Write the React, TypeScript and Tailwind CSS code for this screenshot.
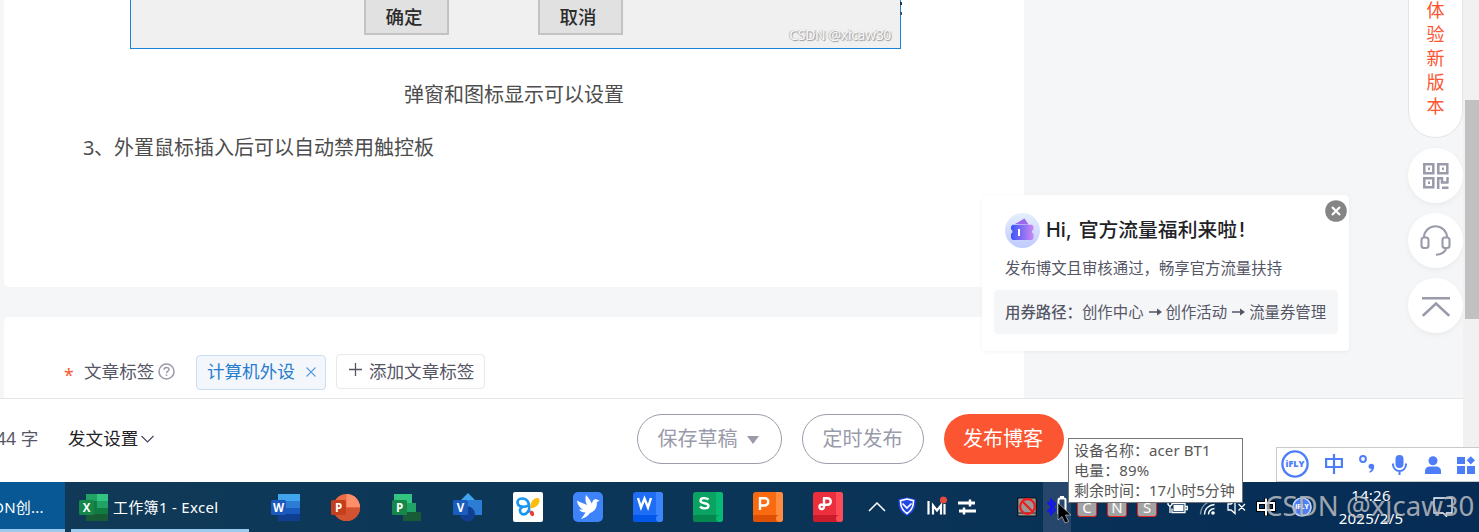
import type { ReactNode } from "react";

const sans = "font-['Noto_Sans','Noto_Sans_CJK_SC',sans-serif]";

/* ---------- Editor page ---------- */

function DialogShot() {
  const button =
    "flex h-[47px] w-[85px] items-end justify-center border-2 border-[#c3c3c3] bg-[#e1e1e1] pr-[5px] pb-[4px] text-[18.5px] font-medium leading-[24px] text-[#2c2c2c]";
  return (
    <div className="relative ml-[126px] flex h-[49px] w-[771px] items-end border border-t-0 border-[#1883d7] bg-[#f0f0f0] pb-[13px]">
      <div className="flex gap-[89px] pl-[233px]">
        <div className={button}>确定</div>
        <div className={button}>取消</div>
      </div>
      <span className="absolute right-[9px] bottom-[3px] text-[14px] leading-[20px] tracking-[-0.35px] whitespace-pre text-[#f8f8f8] [text-shadow:1px_1px_1px_#999,-1px_0_1px_#bbb]">
        CSDN @xicaw30
      </span>
      <span className="absolute -right-[2px] top-[2px] h-[3px] w-[2px] bg-[#333]" />
      <span className="absolute -right-[2px] top-[12px] h-[3px] w-[2px] bg-[#456]" />
    </div>
  );
}

function Article() {
  return (
    <section className="h-[287px] overflow-hidden rounded-b-[5px] bg-white text-[20px] leading-[30px] text-[#4d4d4d]">
      <DialogShot />
      <p className="mt-[31px] text-center">弹窗和图标显示可以设置</p>
      <p className="mt-[23px] pl-[79px]">
        <span className="inline-block w-[11px]">3</span>、外置鼠标插入后可以自动禁用触控板
      </p>
    </section>
  );
}

function Tags() {
  return (
    <section className="mt-[30px] flex h-[81px] items-start rounded-t-[5px] bg-white pl-[60px] text-[17.6px] leading-[34px]">
      <span className="mt-[41px] w-[20px] text-[#fc5531]">*</span>
      <span className="mt-[37px] text-[#555666]">文章标签</span>
      <svg className="mt-[46px] ml-[4px] h-[17px] w-[17px]" viewBox="0 0 17 17" fill="none" stroke="#9a9aaa" strokeWidth="1.5">
        <circle cx="8.5" cy="8.5" r="7.5" />
        <path d="M6 6.8C6 5.2 7 4.4 8.5 4.4S11 5.3 11 6.6C11 8.2 8.5 8.2 8.5 10.2M8.5 11.5V13" />
      </svg>
      <div className="mt-[38px] ml-[21px] flex h-[35px] w-[130px] items-center rounded-[4px] border border-[#c7def3] bg-[#f3f7fc] pl-[9.500px] text-[#277ccc]">
        <span className="-mt-[3px]">计算机外设</span>
        <svg className="mt-[-2px] ml-[11.500px] h-[10px] w-[10px]" viewBox="0 0 10 10" stroke="#5d9bd5" strokeWidth="1.1">
          <path d="M.5 .5 9.5 9.5M9.5 .5.5 9.5" />
        </svg>
      </div>
      <div className="mt-[37px] ml-[10px] flex h-[35px] w-[149px] items-center rounded-[4px] border border-[#e8e8ed] pl-[12px] text-[#555666]">
        <svg className="mt-[-5px] mr-[6.500px] h-[13px] w-[13px]" viewBox="0 0 13 13" stroke="#555666" strokeWidth="1.3">
          <path d="M6.5 0V13M0 6.5H13" />
        </svg>
        <span className="-mt-[1px]">添加文章标签</span>
      </div>
    </section>
  );
}

function RailButton({ children }: { children: ReactNode }) {
  return (
    <div className="flex h-[55px] w-[55px] items-center justify-center rounded-full bg-white shadow-[0_2px_6px_rgba(0,0,0,0.05)]">
      {children}
    </div>
  );
}

function Rail() {
  return (
    <aside className="flex w-[55px] flex-col gap-[10px]">
      <div className="flex h-[138px] flex-col items-center rounded-b-[27px] border border-t-0 border-[#e4e4e6] bg-white text-[18px] leading-[24px] text-[#fc5531]">
        <div className="-mt-[2px] flex w-[18px] flex-col">
          {["体", "验", "新", "版", "本"].map((c) => (
            <span key={c}>{c}</span>
          ))}
        </div>
      </div>
      <RailButton>
        <svg className="mt-px ml-px h-[26px] w-[26px]" viewBox="0 0 26 26" fill="none" stroke="#999aaa" strokeWidth="2.5">
          <path d="M1.300 1.300h9v9h-9zM15.300 1.300h9v9h-9zM1.300 15.300h9v9h-9z" />
          <path d="M5 5.800h2M19 5.800h2M5 19.800h2M15.200 26v-11M14 15.200h5.500M19 14v5.500h6.500M24.500 14v5.500M19 24.800h6.500" />
        </svg>
      </RailButton>
      <RailButton>
        <svg className="h-[31px] w-[31px]" viewBox="0 0 31 31" fill="none" stroke="#999aaa" strokeWidth="2.1">
          <path d="M4 13V12.500a11.500 11.200 0 0 1 23 0V13M26 22.500c0 4-4.500 7.200-10 7.200" />
          <rect x="1.500" y="12.500" width="7" height="10.500" rx="2.500" />
          <rect x="22.500" y="12.500" width="7" height="10.500" rx="2.500" />
        </svg>
      </RailButton>
      <RailButton>
        <svg className="mt-[2px] ml-px h-[20px] w-[28px]" viewBox="0 0 28 20" fill="none" stroke="#999aaa" strokeWidth="2.5">
          <path d="M0 1.300H28M.8 18.800 14 6.500 27.200 18.800" />
        </svg>
      </RailButton>
    </aside>
  );
}

function Arrow() {
  return (
    <svg className="mt-[-1px] mr-[4px] ml-[5px] h-[8px] w-[13px]" viewBox="0 0 13 8" fill="#555666">
      <path d="M0 3.300h8V.5L13 4 8 7.500V4.700H0z" />
    </svg>
  );
}

function Promo() {
  return (
    <div className="absolute top-[195px] left-[982px] h-[156px] w-[367px] rounded-[4px] bg-white shadow-[0_1px_4px_rgba(0,0,0,0.05)]">
      <div className="flex items-center pt-[18px] pl-[23px]">
        <svg className="h-[35px] w-[35px]" viewBox="0 0 35 35">
          <defs>
            <linearGradient id="disc" x2="0" y2="1">
              <stop stopColor="#e6effd" />
              <stop offset="1" stopColor="#bfcaff" />
            </linearGradient>
            <linearGradient id="ticket">
              <stop stopColor="#3c55f8" />
              <stop offset="1" stopColor="#cb86f2" />
            </linearGradient>
          </defs>
          <circle cx="17.500" cy="17.500" r="17.500" fill="url(#disc)" />
          <path d="M10 11 19.500 5.500l4 6z" fill="#9c67eb" />
          <path d="M7.500 11.700H27L28.500 13.500v3a2.300 2.300 0 0 0 0 4.300V25L27 27H7.500L6 25v-4.200a2.300 2.300 0 0 0 0-4.300v-3z" fill="url(#ticket)" />
          <path d="M14 16v7" stroke="#fff" strokeWidth="2" />
        </svg>
        <span className="-mt-[1px] ml-[6px] text-[19.8px] leading-[30px] font-medium whitespace-nowrap text-[#222226] font-['Inter','Noto_Sans_CJK_SC',sans-serif]">
          Hi,<span className="ml-[7px]">官方流量福利来啦</span><span className="ml-[2px]">!</span>
        </span>
      </div>
      <p className="mt-[9px] pl-[23px] text-[15.4px] leading-[24px] text-[#555666]">发布博文且审核通过，畅享官方流量扶持</p>
      <div className="mt-[9px] ml-[12px] flex h-[44px] w-[344px] items-center rounded-[4px] bg-[#f5f6f8] pt-[1px] pl-[11px] text-[15.4px] whitespace-nowrap text-[#555666]">
        <span className="font-medium">用券路径：</span>创作中心<Arrow />创作活动<Arrow />流量券管理
      </div>
      <svg className="absolute top-[4.500px] right-[2.500px] h-[22px] w-[22px]" viewBox="0 0 22 22">
        <circle cx="11" cy="11" r="10.800" fill="#858585" />
        <path d="M7 7l8 8M15 7l-8 8" stroke="#fff" strokeWidth="2.200" />
      </svg>
    </div>
  );
}

function Footer() {
  return (
    <footer className="flex h-[84px] items-center border-t border-[#e5e5e8] bg-white pb-[3px] text-[17.6px] whitespace-nowrap">
      <span className="-mt-[2px] -ml-[4px] w-[72px] text-[#555666]">44 字</span>
      <span className="-mt-[2px] text-[#222226]">发文设置</span>
      <svg className="-mt-[1px] ml-[3px] h-[8px] w-[13px]" viewBox="0 0 13 8" fill="none" stroke="#44405a" strokeWidth="1.100">
        <path d="M.5 1l6 6 6-6" />
      </svg>
      <div className="ml-[483px] flex gap-[20px] text-[20px] leading-[30px]">
        <div className="flex h-[50px] w-[145px] items-center rounded-full border border-[#9c9cac] pl-[19px] text-[#999aaa]">
          保存草稿
          <svg className="mt-px ml-[10px] h-[8px] w-[12px]" viewBox="0 0 12 8" fill="#999aaa">
            <path d="M0 0h12L6 8z" />
          </svg>
        </div>
        <div className="flex h-[50px] w-[122px] items-center justify-center rounded-full border border-[#9c9cac] pr-[2px] text-[#999aaa]">定时发布</div>
        <div className="flex h-[50px] w-[120px] items-center justify-center rounded-full bg-[#fc5531] pr-[3px] text-white">发布博客</div>
      </div>
    </footer>
  );
}

/* ---------- Taskbar ---------- */

function Slot({ w, children }: { w: string; children: ReactNode }) {
  return <div className={`flex h-full shrink-0 items-center justify-center ${w}`}>{children}</div>;
}

function Badge({ letter, fill }: { letter: string; fill: string }) {
  return (
    <>
      <rect x="0" y="7" width="15" height="15" rx="1.500" fill={fill} />
      <text x="7.500" y="18.500" fill="#fff" fontSize="11.500" fontWeight="700" textAnchor="middle" fontFamily="Open Sans, sans-serif">
        {letter}
      </text>
    </>
  );
}

function ExcelIcon() {
  return (
    <svg className="h-[29px] w-[29px]" viewBox="0 0 29 29">
      <rect x="7" y="1" width="22" height="27" rx="1.500" fill="#107c41" />
      <path d="M7 1h11v7H7z" fill="#21a366" />
      <path d="M18 1h11v7H18z" fill="#33c481" />
      <path d="M18 8h11v7H18z" fill="#21a366" />
      <path d="M7 21h22v7H7z" fill="#185c37" />
      <Badge letter="X" fill="#17864a" />
    </svg>
  );
}

function WordIcon() {
  return (
    <svg className="h-[29px] w-[29px]" viewBox="0 0 29 29">
      <rect x="7" y="1" width="22" height="27" rx="1.500" fill="#185abd" />
      <path d="M7 1h22v7H7z" fill="#41a5ee" />
      <path d="M7 8h22v7H7z" fill="#2b7cd3" />
      <path d="M7 21h22v7H7z" fill="#103f91" />
      <Badge letter="W" fill="#1d59bd" />
    </svg>
  );
}

function PowerPointIcon() {
  return (
    <svg className="h-[29px] w-[29px]" viewBox="0 0 29 29">
      <circle cx="15.500" cy="14.500" r="13.500" fill="#ed6c47" />
      <path d="M15.500 1A13.500 13.500 0 0 1 29 14.500H15.500z" fill="#ff8f6b" />
      <path d="M2 14.500a13.500 13.500 0 0 0 27 0z" fill="#d35230" />
      <Badge letter="P" fill="#c4401c" />
    </svg>
  );
}

function ProjectIcon() {
  return (
    <svg className="h-[29px] w-[29px]" viewBox="0 0 29 29">
      <path d="M2 1h18v10H2z" fill="#33c481" />
      <path d="M12 10h12v9H12z" fill="#21a366" />
      <path d="M11 19h18v9H11z" fill="#185c37" />
      <Badge letter="P" fill="#17864a" />
    </svg>
  );
}

function VisioIcon() {
  return (
    <svg className="h-[29px] w-[29px]" viewBox="0 0 29 29">
      <path d="M15 0l9 9-9 9-9-9z" fill="#41a5ee" />
      <path d="M15 7h14v15H15z" fill="#2b7cd3" />
      <circle cx="14.500" cy="21" r="7.500" fill="#103f91" />
      <Badge letter="V" fill="#1b5dbe" />
    </svg>
  );
}

function ButterflyIcon() {
  return (
    <svg className="h-[30px] w-[30px]" viewBox="0 0 30 30">
      <rect width="30" height="30" rx="2" fill="#fff" />
      <g fill="none" stroke="#1597f3" strokeWidth="2.700">
        <path d="M15.500 20.500C17.500 12 15 6.500 9 6.500c-6 0-6 7.500 0 8.200 3 .3 5-.5 6-1.200" />
        <path d="M9.500 14.700c-3 1.500-3.500 5.500-.5 7.300 2.500 1 5.500-.5 6.500-3.500" />
      </g>
      <path d="M17.500 16.500C16.500 10 22 4.500 26 6.500c2 4-2 9.500-8.500 10z" fill="#fdbd0b" />
      <path d="M17.500 18.500c3 0 4.500 3 3 5.500-3 .5-4.500-3-3-5.500z" fill="#ee3738" />
    </svg>
  );
}

function BirdIcon() {
  return (
    <svg className="h-[30px] w-[30px]" viewBox="0 0 30 30">
      <rect width="30" height="30" rx="5" fill="#3f83fb" />
      <path d="M13 3c2.500 2.500 4.500 5 5.500 8.500l2-3.500 2-1 4 1.500-2.800 2c.8 5-2.200 9-6.700 10.500-2 3-5 5-9 6 1.500-2 3-4 4.500-6.500-3 0-5-1-6.500-3h4.500c-3-1-6-4-6.500-9 3 2 6 2.800 10 4.500C12.500 10 12 6.500 13 3z" fill="#fff" />
    </svg>
  );
}

function WpsIcon({ main, light, dark, children }: { main: string; light: string; dark: string; children: ReactNode }) {
  return (
    <svg className="h-[30px] w-[30px]" viewBox="0 0 30 30">
      <rect width="30" height="30" rx="3" fill={main} />
      <path d="M23 0h4a3 3 0 0 1 3 3v24H23z" fill={light} />
      <path d="M0 23h27v7H3a3 3 0 0 1-3-3z" fill={dark} />
      <ellipse cx="26.500" cy="26.500" rx="3.500" ry="3.500" fill={light} />
      <g fill="none" stroke="#fff" strokeWidth="2.400">
        {children}
      </g>
    </svg>
  );
}

function PinnedApps() {
  return (
    <>
      <Slot w="w-[60px]"><WordIcon /></Slot>
      <Slot w="w-[61px]"><PowerPointIcon /></Slot>
      <Slot w="w-[61px]"><ProjectIcon /></Slot>
      <Slot w="w-[61px]"><VisioIcon /></Slot>
      <Slot w="w-[60px]"><ButterflyIcon /></Slot>
      <Slot w="w-[60px]"><BirdIcon /></Slot>
      <Slot w="w-[60px]">
        <WpsIcon main="#1f6df5" light="#3d85ff" dark="#0357e8">
          <path d="M5 6l3 9.500L11.500 6.500 15 15.500 18 6" />
        </WpsIcon>
      </Slot>
      <Slot w="w-[60px]">
        <WpsIcon main="#0ba361" light="#08b974" dark="#048850">
          <path d="M15.500 7.500C13 5.500 7.500 5.500 7.500 8.700c0 3.500 8 1.500 8 5 0 3.300-6 3.500-8.500 1" />
        </WpsIcon>
      </Slot>
      <Slot w="w-[60px]">
        <WpsIcon main="#fa6a10" light="#ff8b3e" dark="#de5005">
          <path d="M7 18V6.200h5.500a3.800 3.800 0 0 1 0 7.300H7" />
        </WpsIcon>
      </Slot>
      <Slot w="w-[60px]">
        <WpsIcon main="#eb2f3d" light="#fd4b58" dark="#cb1c2b">
          <path d="M10 6.200h4.500a3.300 3.300 0 0 1 0 6.600H7.500a2.300 2.300 0 1 0 3.500 2.200V6.200" />
        </WpsIcon>
      </Slot>
    </>
  );
}

function LockKey({ letter }: { letter: string }) {
  return (
    <div className="flex h-[20px] w-[20px] items-center justify-center rounded-[3px] border border-[#e92020] bg-[#a3a3a3] text-[15px] leading-none text-white">
      {letter}
    </div>
  );
}

function IflyLogo({ small = false }: { small?: boolean }) {
  return (
    <svg className={small ? "h-[20px] w-[20px]" : "h-[28px] w-[28px]"} viewBox="0 0 28 28">
      <circle cx="14" cy="14" r="12.600" fill={small ? "#4d80f5" : "#fff"} stroke={small ? "#c5d7ff" : "#4d7df8"} strokeWidth="2.300" />
      <text x="14" y="17.300" textAnchor="middle" fontSize="9" fontWeight="800" fontFamily="Open Sans, sans-serif" fill={small ? "#fff" : "#4d7df8"}>
        iFLY
      </text>
    </svg>
  );
}

function Tray() {
  return (
    <>
      <Slot w="w-[30px]">
        <svg className="h-[10px] w-[18px]" viewBox="0 0 18 10" fill="none" stroke="#fff" strokeWidth="1.500">
          <path d="M1 9l8-8 8 8" />
        </svg>
      </Slot>
      <Slot w="w-[30px]">
        <svg className="-mt-[2px] h-[19px] w-[18px]" viewBox="0 0 18 19" fill="#2447e8" stroke="#fff" strokeWidth="1.600">
          <path d="M9 .3l8.500 2C17.800 11 16 15 9 18.800 2 15 .2 11 .5 2.300z" stroke="none" />
          <path d="M9 2l6.500 1.700C15.500 10 14 13.500 9 16.500 4 13.500 2.500 10 2.500 3.700zM4.500 6.500 9 11l4.500-4.500" />
        </svg>
      </Slot>
      <Slot w="w-[30px]">
        <svg className="-mt-[2px] h-[20px] w-[20px]" viewBox="0 0 20 20" fill="none" stroke="#fff" strokeWidth="2.200">
          <path d="M1.500 5v13.500M6 18.500V9.500l4 5 4-5v9M17.500 8v10.500" />
          <circle cx="16.500" cy="4" r="3.600" fill="#e34b3d" stroke="none" />
        </svg>
      </Slot>
      <Slot w="w-[30px]">
        <svg className="h-[16px] w-[18px]" viewBox="0 0 18 16" fill="none" stroke="#fff">
          <path d="M0 4h17M1 12h17" strokeWidth="3" />
          <path d="M12 .5v7M6 8.500v7" strokeWidth="2.500" />
        </svg>
      </Slot>
      <div className="w-[29px]" />
      <Slot w="w-[32px]">
        <svg className="h-[20px] w-[20px]" viewBox="0 0 20 20">
          <rect x=".7" y="1" width="18.600" height="18" rx="1" fill="#999" stroke="#111" strokeWidth="1.200" />
          <path d="M1 16h18" stroke="#222" />
          <circle cx="10.500" cy="9.500" r="7.300" fill="none" stroke="#f21b1b" strokeWidth="2.200" />
          <path d="M5.500 4.500l10 10" stroke="#f21b1b" strokeWidth="2.200" />
        </svg>
      </Slot>
      <div className="mr-px flex h-full w-[28px] items-center justify-start bg-[#27466c] pl-[3px]">
        <svg className="h-[22px] w-[22px] shrink-0" viewBox="0 0 22 22" fill="none">
          <path d="M1.500 6l7.500 8-4 4V4l4 4-7.500 8" stroke="#1414ef" strokeWidth="2" />
          <path d="M12.500 17V4q0-1.500 1.500-1.500h4q1.500 0 1.500 1.500v13z" stroke="#fff" strokeWidth="2" />
          <path d="M14 1h4" stroke="#fff" strokeWidth="2" />
        </svg>
      </div>
      <Slot w="w-[30px]"><LockKey letter="C" /></Slot>
      <Slot w="w-[30px]"><LockKey letter="N" /></Slot>
      <Slot w="w-[30px]"><LockKey letter="S" /></Slot>
      <Slot w="w-[30px]">
        <svg className="h-[18px] w-[21px]" viewBox="0 0 21 18" fill="none" stroke="#fff" strokeWidth="1.300">
          <path d="M5 5.500h13v9H5v-4M18.500 8.500h1.800v3h-1.800M1 3.500v3l2 2 2-2v-3M3 8.500v6.500" />
          <path d="M6.500 7h10v6h-10z" fill="#fff" stroke="none" />
        </svg>
      </Slot>
      <Slot w="w-[30px]">
        <svg className="h-[17px] w-[17px]" viewBox="0 0 17 17" fill="none" stroke="#fff" strokeWidth="1.400">
          <circle cx="14" cy="14" r="1.800" fill="#fff" stroke="none" />
          <path d="M9.500 15.500c0-3 2-5.500 6-6M5.500 15.500c0-5.500 4-9.500 10-10" />
          <path d="M1.500 15.500C1.500 8 7 2 15.500 1.500" stroke="#7e92ad" />
        </svg>
      </Slot>
      <Slot w="w-[30px]">
        <svg className="-ml-[2px] h-[16px] w-[19px]" viewBox="0 0 19 16" fill="none" stroke="#fff" strokeWidth="1.300">
          <path d="M1 5v6h3l4 3.500v-13L4 5zM11.500 5l6.500 6.500M18 5l-6.500 6.500" />
        </svg>
      </Slot>
      <Slot w="w-[30px]">
        <svg className="-ml-[2px] h-[20px] w-[20px]" viewBox="0 0 20 20" fill="none">
          <path d="M2 6h16v7H2zM10 1v18" stroke="#000" strokeWidth="4" />
          <path d="M2 6h16v7H2zM10 1.500v17" stroke="#fff" strokeWidth="2" />
        </svg>
      </Slot>
      <Slot w="w-[40px]"><IflyLogo small /></Slot>
      <Slot w="w-[98px]">
        <div className="-mt-[1px] flex flex-col items-center text-[15px] leading-[23px] tracking-[0.250px] text-white">
          <span>14:26</span>
          <span>2025/2/5</span>
        </div>
      </Slot>
      <Slot w="w-[46px]">
        <svg className="h-[20px] w-[20px]" viewBox="0 0 20 20" fill="none" stroke="#fff" strokeWidth="1.300">
          <path d="M1 1h18v15h-5.500v3.500L10 16H1z" />
        </svg>
      </Slot>
    </>
  );
}

function Taskbar() {
  return (
    <div className="flex h-[50px] w-full overflow-hidden bg-linear-to-r from-[#103a57] via-[#0b3557] to-[#062c56] text-[15px] whitespace-nowrap text-white">
      <div className="flex w-[65px] items-center border-b-[3px] border-[#9bcaee] bg-[#075894]">
        <span className="-ml-[7px] pt-[3px] tracking-[0.2px]">DN创...</span>
      </div>
      <div className="mr-[6px] ml-[6px] flex w-[178px] items-center border-b-[3px] border-[#9bcaee] pl-[8px]">
        <div className="mt-[3px]"><ExcelIcon /></div>
        <span className="ml-[5px] pt-[3px] tracking-[0.300px]">工作簿1 - Excel</span>
      </div>
      <PinnedApps />
      <div className="w-[4px]" />
      <Tray />
    </div>
  );
}

/* ---------- Floating windows ---------- */

function InputBar() {
  return (
    <div className="absolute top-[447px] left-[1276px] flex h-[35px] w-[204px] items-center border border-[#cacaca] bg-white pb-[1px] pl-[4px]">
      <IflyLogo />
      <svg className="ml-[16px] h-[20px] w-[18px]" viewBox="0 0 18 20" fill="none" stroke="#4d7df8" strokeWidth="2.200">
        <path d="M1.100 5h15.800v8H1.100zM9 0v20" />
      </svg>
      <svg className="ml-[16px] h-[18px] w-[16px]" viewBox="0 0 16 18">
        <circle cx="4" cy="4" r="2.900" fill="none" stroke="#4d7df8" strokeWidth="2" />
        <path d="M9.500 11.500a2.800 2.800 0 1 1 5.700 0c0 3-1.700 5.500-4.700 6.300v-1.500c1.300-.5 2-1.500 2-2.300-1.800 0-3-.8-3-2.500z" fill="#4d7df8" />
      </svg>
      <svg className="mt-[2px] ml-[17px] h-[20px] w-[15px]" viewBox="0 0 15 20" fill="none" stroke="#4d7df8" strokeWidth="2">
        <rect x="3.500" y="0" width="8" height="13" rx="4" fill="#4d7df8" stroke="none" />
        <path d="M1 8.500v1a6.500 6.500 0 0 0 13 0v-1M7.500 16v4" />
      </svg>
      <svg className="mt-[2px] ml-[18px] h-[18px] w-[16px]" viewBox="0 0 16 18" fill="#4d7df8">
        <circle cx="8" cy="4.700" r="4.500" />
        <path d="M0 18v-3c0-3 2-4.500 5-4.500h6c3 0 5 1.500 5 4.500v3z" />
      </svg>
      <svg className="mt-[2px] ml-[16px] h-[18px] w-[18px] shrink-0" viewBox="0 0 18 18" fill="#4d7df8">
        <path d="M0 1h8v7H0zM0 10h8v8H0zM10 10h8v8h-8zM13.800.200l4.100 4.100-4.100 4.100-4.100-4.100z" />
      </svg>
    </div>
  );
}

function DeviceTooltip() {
  return (
    <div className="absolute top-[438px] left-[1068px] h-[65px] w-[175px] border border-[#767676] bg-white pt-[1px] pl-[5px] text-[15px] leading-[20px] whitespace-nowrap text-[#575757]">
      <p>设备名称：<span className="tracking-[0.1px]">acer BT1</span></p>
      <p className="tracking-[0.1px]">电量：89%</p>
      <p>剩余时间：17小时5分钟</p>
    </div>
  );
}

export default function App() {
  return (
    <div className={`relative flex h-[532px] w-[1479px] flex-col overflow-hidden ${sans}`}>
      <div className="flex h-[482px]">
        <div className="flex w-[1463px] flex-col">
          <main className="flex h-[398px] justify-between overflow-hidden bg-[#f5f6f8] pl-[4px]">
            <div className="w-[1020px]">
              <Article />
              <Tags />
            </div>
            <Rail />
          </main>
          <Footer />
        </div>
        <div className="w-[16px] bg-[#f1f1f1] pt-[100px] pl-[2px]">
          <div className="h-[219px] bg-[#c1c1c1]" />
        </div>
      </div>
      <Taskbar />
      <Promo />
      <DeviceTooltip />
      <InputBar />
      <svg className="absolute top-[502px] left-[1057px] h-[22px] w-[16px]" viewBox="0 0 16 22">
        <path d="M1 1v17l4-3.500 3 6.500 3.500-1.500-3-6.500H14z" fill="#000" stroke="#d8d8d8" strokeWidth=".600" />
      </svg>
      <span className="absolute top-[487px] left-[1265px] text-[27.6px] leading-[36px] whitespace-nowrap text-[#c6ccd4]/75 [text-shadow:0_0_1px_rgba(60,60,60,0.5)]">
        CSDN @xjcaw30
      </span>
    </div>
  );
}
